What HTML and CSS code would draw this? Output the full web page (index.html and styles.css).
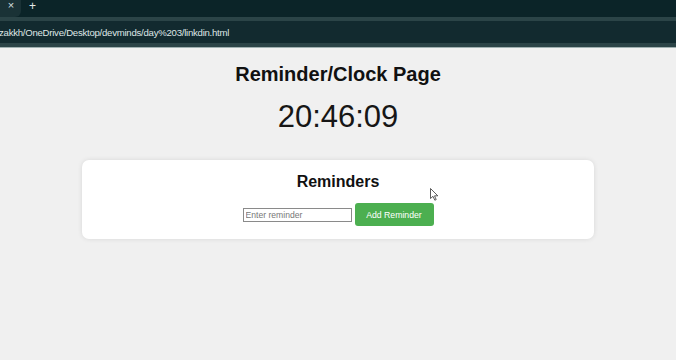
FILE: index.html
```html
<!DOCTYPE html>
<html lang="en">
<head>
<meta charset="utf-8">
<title>Reminder/Clock Page</title>
<link rel="stylesheet" href="styles.css">
</head>
<body>
<header class="chrome">
  <div class="tabbar">
    <div class="tab"><span class="tab-close">×</span></div>
    <span class="tab-new">+</span>
  </div>
  <div class="toolbar">
    <div class="omnibox"><span class="url">zakkh/OneDrive/Desktop/devminds/day%203/linkdin.html</span></div>
  </div>
</header>
<main class="page">
  <h1 class="title">Reminder/Clock Page</h1>
  <div class="clock">20:46:09</div>
  <section class="card">
    <h2 class="card-title">Reminders</h2>
    <div class="form-row">
      <input class="reminder-input" type="text" placeholder="Enter reminder">
      <button class="add-btn" type="button">Add Reminder</button>
    </div>
  </section>
  <svg class="cursor" width="9" height="13" viewBox="0 0 9 13"><path d="M0.5 0.5 L0.5 10.5 L3 8.3 L4.8 12.2 L6.2 11.6 L4.5 7.8 L7.8 7.8 Z" fill="#fff" stroke="#333" stroke-width="0.8" stroke-linejoin="round"/></svg>
</main>
</body>
</html>
```

FILE: styles.css
```css
html, body {
  margin: 0;
  padding: 0;
  height: 100%;
}
body {
  background: #f0f0f0;
  font-family: "Liberation Sans", Arial, sans-serif;
  overflow: hidden;
}
.chrome {
  background: #0b2428;
}
.tabbar {
  height: 17px;
  display: flex;
  align-items: flex-start;
  background: #0b2428;
}
.tab {
  width: 21px;
  height: 17px;
  background: #1a3236;
  border-bottom-right-radius: 6px;
  display: flex;
  justify-content: center;
}
.tab-close {
  color: #d8e0e0;
  font-size: 11px;
  line-height: 11px;
  margin-left: 1px;
}
.tab-new {
  color: #e4eaea;
  font-size: 12px;
  line-height: 12px;
  margin-left: 8px;
}
.toolbar {
  background: #2b4447;
  padding: 4px 0 4px;
  border-bottom: 1px solid #9fb0b0;
}
.omnibox {
  height: 22px;
  background: #122a2f;
  display: flex;
  align-items: center;
  overflow: hidden;
}
.url {
  color: #dfe6e6;
  font-size: 9.6px;
  letter-spacing: -0.25px;
  margin-left: -1px;
  white-space: nowrap;
  font-family: "Liberation Sans", Arial, sans-serif;
}
.page {
  position: relative;
  padding-top: 15px;
  text-align: center;
}
.title {
  margin: 0;
  font-size: 20px;
  font-weight: bold;
  line-height: 23px;
  color: #111;
}
.clock {
  margin-top: 12px;
  font-size: 31px;
  line-height: 37px;
  color: #161616;
}
.card {
  width: 512px;
  box-sizing: border-box;
  margin: 25px auto 0;
  background: #fff;
  border-radius: 7px;
  box-shadow: 0 0 5px rgba(0, 0, 0, 0.1);
  padding: 13px 0 13px;
}
.card-title {
  margin: 0 0 12px;
  font-size: 16px;
  line-height: 18px;
  font-weight: bold;
  color: #111;
}
.form-row {
  display: flex;
  justify-content: center;
  align-items: center;
  gap: 3px;
}
.reminder-input {
  width: 109px;
  height: 14px;
  box-sizing: border-box;
  border: 1px solid #8a8a8a;
  padding: 0 2px;
  font-family: "Liberation Sans", Arial, sans-serif;
  font-size: 8.6px;
  margin: 0;
  background: #fff;
}
.reminder-input::placeholder {
  color: #777;
}
.add-btn {
  width: 79px;
  height: 23px;
  border: none;
  border-radius: 3px;
  background: #4caf50;
  color: #fff;
  font-family: "Liberation Sans", Arial, sans-serif;
  font-size: 8.7px;
  padding: 0;
  margin: 0;
}
.cursor {
  position: absolute;
  left: 430px;
  top: 140px;
}
```
